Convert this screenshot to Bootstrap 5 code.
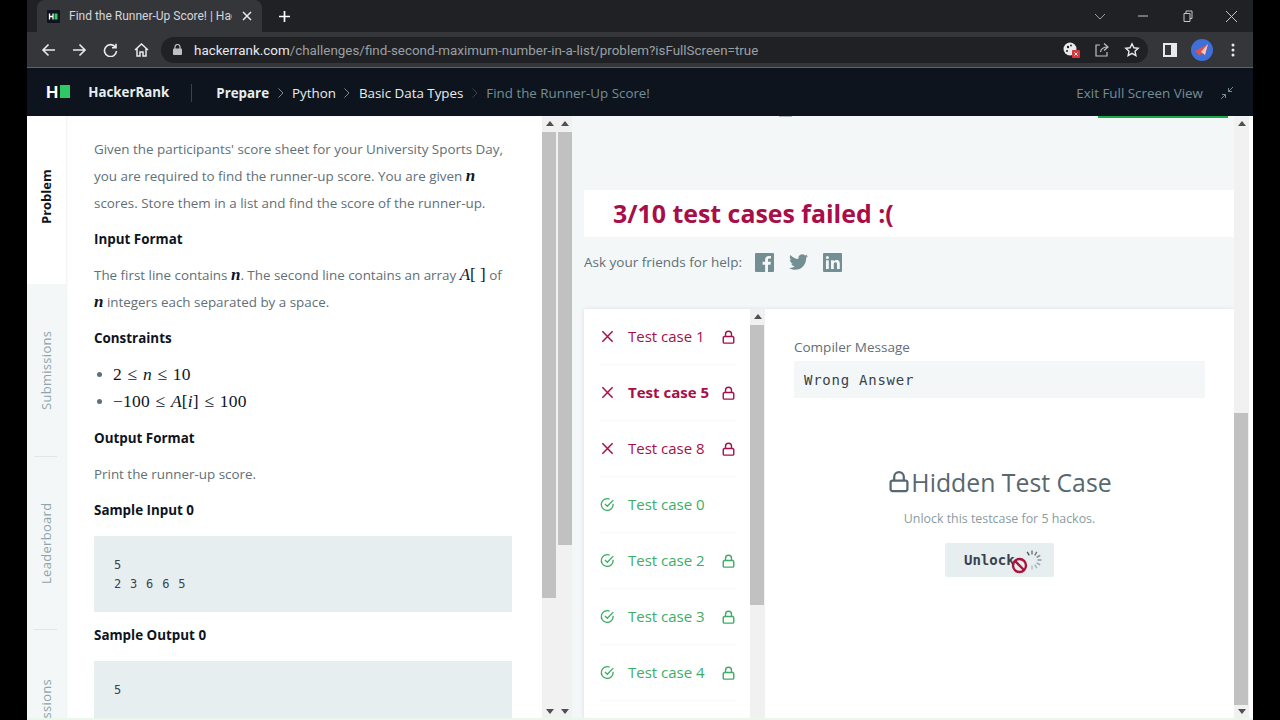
<!DOCTYPE html>
<html lang="en">
<head>
  <meta charset="UTF-8" />
  <title>Find the Runner-Up Score!</title>
  <link href="https://cdn.jsdelivr.net/npm/bootstrap@5.3.0/dist/css/bootstrap.min.css" rel="stylesheet" />
  <style>
    html, body { height: 720px; overflow: hidden; background: #000; }
    body { font-family: "Open Sans", sans-serif; font-size: 13.4px; color: #616f78; }
    .frame { width: 1226px; height: 720px; margin-left: 27px; overflow: hidden; background: #fff; }

    /* browser chrome */
    .tabstrip { height: 32px; background: #202124; color: #e8eaed; }
    .tab-active { width: 225px; height: 32px; margin-left: 10px; padding: 0 10px; background: #35363a; border-radius: 8px 8px 0 0; font-family: Roboto, sans-serif; font-size: 12px; }
    .tab-title { width: 163px; margin-left: 9px; white-space: nowrap; overflow: hidden; color: #d5d7da; }
    .new-tab { margin-left: 16px; }
    .win-btns { margin-left: auto; padding-right: 15px; gap: 31px; }
    .toolbar { height: 36px; background: #35363a; padding-left: 14px; border-bottom: 1px solid #5f6368; }
    .tool-icons { gap: 16px; }
    .omnibox { width: 987px; height: 26px; margin-left: 12px; padding: 0 8px 0 12px; background: #202124; border-radius: 13px; font-family: Roboto, sans-serif; font-size: 13.4px; color: #9aa0a6; }
    .omnibox b { font-weight: 400; color: #e8eaed; }
    .url-text { margin: 3px 0 0 12px; white-space: nowrap; }
    .omni-right { margin-left: auto; gap: 14px; }
    .tool-right { margin-left: 15px; }
    .avatar-dot { width: 22px; height: 22px; margin: 0 18px 0 14px; border-radius: 50%; background: #3f6fd8; }

    /* hackerrank header */
    .hr-nav { height: 48px; background: #0e141e; padding: 2px 19px 0; color: #fff; }
    .hr-logo { font-family: "Liberation Sans", sans-serif; font-weight: 700; font-size: 17px; line-height: 1; margin-top: -1px; }
    .hr-logo i { display: inline-block; width: 10px; height: 13px; margin-left: 2px; background: #2ec866; }
    .hr-brand { margin-left: 18px; font-weight: 700; font-size: 13.3px; color: #e7eeef; }
    .hr-sep { width: 1px; height: 18px; margin: 0 24px 0 22px; background: #39424e; }
    .hr-crumbs { font-size: 13.35px; color: #e7eeef; gap: 7.5px; }
    .hr-crumbs .is-last { color: #738f93; }
    .hr-exit { margin-left: auto; color: #738f93; gap: 17px; font-size: 13.4px; }

    /* page */
    .workspace { height: 604px; overflow: hidden; position: relative; }
    .workspace::after { content: ""; position: absolute; left: 0; right: 0; bottom: 0; height: 2px; background: #eaf8ec; }
    .side-tabs { width: 39px; flex: none; background: #f3f7f7; }
    .side-tab { flex: none; height: 172px; writing-mode: vertical-rl; transform: rotate(180deg); font-size: 13px; color: #8fa5aa; letter-spacing: .3px; }
    .side-tab.is-on { height: 168px; background: #fff; color: #0e141e; font-weight: 700; letter-spacing: 0; padding-top: 6px; }
    .side-rule { height: 1px; margin: 0 9px 0 7px; background: #dfe7e8; flex: none; }
    .problem { width: 476px; flex: none; padding: 20px 30px 0 28px; background: #fff; box-shadow: inset 1px 0 2px rgba(57,66,78,.08); }
    .problem p { line-height: 27px; margin-bottom: 9px; color: #616f78; }
    .problem h6 { font-size: 13.4px; font-weight: 700; line-height: 27px; color: #0e141e; margin-bottom: 9px; }
    .problem ul { padding-left: 19px; margin-bottom: 10px; color: #39424e; }
    .problem li { line-height: 27px; }
    .problem li::marker { color: #616f78; }
    .mth { font-family: "Liberation Serif", serif; font-size: 17px; line-height: 1; color: #0e141e; }
    .mth em { font-weight: 700; }
    .mth-plain em { font-weight: 400; }
    .mth-wide { font-size: 17.5px; letter-spacing: .2px; word-spacing: 1px; position: relative; top: 1px; }
    .sample { height: 76px; margin: 12px 0 10px; padding: 20px 20px 0; background: #e7eeef; font-family: "DejaVu Sans Mono", monospace; font-size: 12px; letter-spacing: .8px; line-height: 19px; color: #39424e; white-space: pre; }
    .scroll-y { width: 15px; flex: none; background: #f1f1f1; position: relative; padding-top: 16px; }
    .scroll-thumb { width: 14px; background: #c1c1c1; }
    .scroll-y.to-right .scroll-thumb { margin-left: 1px; }
    .arrow-up, .arrow-down { position: absolute; left: 4px; width: 0; height: 0; border-left: 4px solid transparent; border-right: 4px solid transparent; }
    .arrow-up { top: 5px; border-bottom: 5px solid #505050; }
    .arrow-down { bottom: 6px; border-top: 5px solid #505050; }

    .results { width: 662px; flex: none; padding: 74px 0 0 12px; background: #f3f7f7; overflow: hidden; position: relative; }
    .green-edge { position: absolute; top: 0; right: 6px; width: 130px; height: 2px; background: #1ba94c; }
    .grey-edge { position: absolute; top: 0; left: 207px; width: 13px; height: 1px; background: #b5bcbf; }
    .fail-band { height: 47px; padding-left: 29px; background: #fff; font-size: 24.9px; font-weight: 700; line-height: 47px; color: #a80e47; }
    .ask-row { height: 24px; margin-top: 13px; gap: 14px; font-size: 13.5px; color: #616f78; }
    .ask-icons { gap: 15px; margin-left: -1px; }
    .tests-card { height: 420px; margin-top: 35px; background: #fff; box-shadow: 0 0 4px rgba(57,66,78,.12); }
    .tests-list { width: 166px; flex: none; padding: 0 14px 0 16px; border: 0; }
    .tests-list .list-group-item { height: 56px; padding: 0; background: transparent; border: 0; border-bottom: 1px solid #f6f9f9; border-radius: 0; font-size: 15px; }
    .is-fail { color: #a80e47; }
    .is-pass { color: #3dad66; }
    .t-name { margin-left: 13px; flex: 1; white-space: nowrap; }
    .t-lock { margin-top: 2px; }
    .test-detail { padding: 29px 29px 0 29px; flex: 1; min-width: 0; }
    .detail-label { font-size: 13.5px; line-height: 18px; color: #616f78; }
    .wrong-box { height: 37px; margin-top: 5px; padding-left: 10px; background: #f3f7f7; font-family: "DejaVu Sans Mono", monospace; font-size: 14px; letter-spacing: .75px; line-height: 38px; color: #39424e; }
    .hidden-head { margin-top: 65px; font-size: 24.8px; line-height: 38px; color: #576871; }
    .hidden-sub { margin-top: 9px; font-size: 12.4px; line-height: 18px; color: #8a9ba0; }
    .unlock-btn { width: 109px; height: 34px; margin-top: 15px; padding: 0 0 0 19px; background: #e7eeef; border: 0; border-radius: 2px; font-family: "DejaVu Sans Mono", monospace; font-size: 14px; font-weight: 700; color: #39424e; text-align: left; position: relative; }
    .btn-spin { position: absolute; left: 76px; top: 6px; }
    .no-cursor { position: absolute; left: 66px; top: 14px; }
  </style>
</head>
<body>
  <svg width="0" height="0" class="position-absolute">
    <symbol id="lock" viewBox="0 0 16 16"><path d="M4.800 7V4.600a3.200 3.200 0 0 1 6.400 0V7M3.600 7h8.800a1.200 1.200 0 0 1 1.200 1.200v4.600a1.200 1.200 0 0 1-1.200 1.200H3.600a1.200 1.200 0 0 1-1.200-1.200V8.200a1.200 1.200 0 0 1 1.200-1.200z" fill="none" stroke="currentColor" stroke-width="1.500"/></symbol>
    <symbol id="cross" viewBox="0 0 16 16"><path d="M2.500 2.500l11 11M13.500 2.500l-11 11" fill="none" stroke="currentColor" stroke-width="1.600"/></symbol>
    <symbol id="check" viewBox="0 0 16 16"><path d="M14 7.300V8a6.300 6.300 0 1 1-3.700-5.700M5.200 7.300l2.600 2.600 6.400-6.600" fill="none" stroke="currentColor" stroke-width="1.400"/></symbol>
    <symbol id="chev" viewBox="0 0 8 12"><path d="M1.500 1.500L6 6l-4.500 4.500" fill="none" stroke="currentColor" stroke-width="1"/></symbol>
  </svg>

  <div class="frame">
    <div class="tabstrip d-flex align-items-center">
      <div class="tab-active d-flex align-items-center">
        <svg width="13" height="13" viewBox="0 0 13 13"><rect width="13" height="13" rx="1" fill="#0e141e"/><path d="M2.500 3.500v6M6 3.500v6M2.500 6.500H6" stroke="#fff" stroke-width="1.300"/><rect x="7.500" y="3.500" width="3" height="6" fill="#2ec866"/></svg>
        <span class="tab-title">Find the Runner-Up Score! | Hac</span>
        <svg class="ms-auto" width="10" height="10" viewBox="0 0 10 10"><path d="M1 1l8 8M9 1l-8 8" stroke="#e8eaed" stroke-width="1.500"/></svg>
      </div>
      <svg class="new-tab" width="13" height="13" viewBox="0 0 13 13"><path d="M6.500 1v11M1 6.500h11" stroke="#fff" stroke-width="1.700"/></svg>
      <div class="win-btns d-flex align-items-center">
        <svg width="12" height="12" viewBox="0 0 12 12"><path d="M1 4l5 5 5-5" fill="none" stroke="#9aa0a6"/></svg>
        <svg width="13" height="12" viewBox="0 0 13 12"><path d="M1 6h10" stroke="#c4c7c9"/></svg>
        <svg width="13" height="12" viewBox="0 0 13 12"><path d="M3 3.500h6v8H3zM5 3.500V1h6v7.500H9" fill="none" stroke="#c4c7c9"/></svg>
        <svg width="13" height="13" viewBox="0 0 13 13"><path d="M1 1l11 11M12 1L1 12" stroke="#c4c7c9"/></svg>
      </div>
    </div>

    <div class="toolbar d-flex align-items-center">
      <div class="tool-icons d-flex align-items-center">
        <svg width="15" height="14" viewBox="0 0 15 14"><path d="M14 7H2M7.500 1.500L2 7l5.500 5.500" fill="none" stroke="#e8eaed" stroke-width="1.600"/></svg>
        <svg width="15" height="14" viewBox="0 0 15 14"><path d="M1 7h12M7.500 1.500L13 7l-5.500 5.500" fill="none" stroke="#e8eaed" stroke-width="1.600"/></svg>
        <svg width="15" height="14" viewBox="0 0 15 14"><path d="M12.500 4.300A6 6 0 1 0 13.500 8M13 .8v4h-4" fill="none" stroke="#e8eaed" stroke-width="1.600"/></svg>
        <svg width="15" height="14" viewBox="0 0 15 14"><path d="M1 7l6.500-6L14 7M3 5.500V13h3V9h3v4h3V5.500" fill="none" stroke="#e8eaed" stroke-width="1.500"/></svg>
      </div>
      <div class="omnibox d-flex align-items-center">
        <svg width="9" height="11" viewBox="0 0 9 11"><path d="M2 5V3a2.500 2.500 0 0 1 5 0v2" fill="none" stroke="#bdc1c6" stroke-width="1.200"/><rect y="4.500" width="9" height="6.500" rx="1" fill="#bdc1c6"/></svg>
        <span class="url-text"><b>hackerrank.com</b>/challenges/find-second-maximum-number-in-a-list/problem?isFullScreen=true</span>
        <div class="omni-right d-flex align-items-center">
          <svg width="17" height="16" viewBox="0 0 17 16"><circle cx="7" cy="7" r="6.500" fill="#e8eaed"/><circle cx="5" cy="5" r="1.200" fill="#202124"/><circle cx="8" cy="3.500" r=".9" fill="#202124"/><circle cx="4" cy="9" r="1" fill="#202124"/><rect x="9" y="8" width="8" height="8" rx="1" fill="#d9363e"/><path d="M11.500 10.500l3 3M14.500 10.500l-3 3" stroke="#fff"/></svg>
          <svg width="16" height="16" viewBox="0 0 16 16"><path d="M6 3H2v11h11v-4M6.500 10c.5-3 3-5 7-5M10 1.500L14 5l-4 3.500" fill="none" stroke="#bdc1c6" stroke-width="1.200"/></svg>
          <svg width="16" height="16" viewBox="0 0 16 16"><path d="M8 1.800l1.900 4 4.300.5-3.200 3 .9 4.300L8 11.400l-3.900 2.200.9-4.300-3.200-3 4.300-.5z" fill="none" stroke="#e8eaed" stroke-width="1.400"/></svg>
        </div>
      </div>
      <div class="tool-right d-flex align-items-center">
        <svg width="14" height="14" viewBox="0 0 14 14"><rect x="1" y="1" width="12" height="12" fill="none" stroke="#e8eaed" stroke-width="2"/><rect x="8" y="1" width="5" height="12" fill="#e8eaed"/></svg>
        <svg class="avatar-dot" viewBox="0 0 22 22"><path d="M4 12l13-7-3 11-3-3-2 4z" fill="#d9534f"/><path d="M10 13l7-8-3 11z" fill="#f4c9c4"/></svg>
        <svg width="4" height="14" viewBox="0 0 4 14"><circle cx="2" cy="2" r="1.500" fill="#e8eaed"/><circle cx="2" cy="7" r="1.500" fill="#e8eaed"/><circle cx="2" cy="12" r="1.500" fill="#e8eaed"/></svg>
      </div>
    </div>

    <nav class="hr-nav d-flex align-items-center">
      <span class="hr-logo">H<i></i></span>
      <span class="hr-brand">HackerRank</span>
      <span class="hr-sep"></span>
      <div class="hr-crumbs d-flex align-items-center">
        <strong>Prepare</strong>
        <svg width="8" height="12" color="#738f93"><use href="#chev"/></svg>
        <span>Python</span>
        <svg width="8" height="12" color="#738f93"><use href="#chev"/></svg>
        <span>Basic Data Types</span>
        <svg width="8" height="12" color="#39424e"><use href="#chev"/></svg>
        <span class="is-last">Find the Runner-Up Score!</span>
      </div>
      <div class="hr-exit d-flex align-items-center">
        <span>Exit Full Screen View</span>
        <svg width="14" height="14" viewBox="0 0 14 14"><path d="M8.500 5.500L13 1M8.500 2v3.500H12M5.500 8.500L1 13M5.500 12V8.500H2" fill="none" stroke="#738f93"/></svg>
      </div>
    </nav>

    <div class="workspace d-flex">
      <div class="side-tabs d-flex flex-column">
        <div class="side-tab is-on d-flex align-items-center justify-content-center">Problem</div>
        <div class="side-tab d-flex align-items-center justify-content-center">Submissions</div>
        <div class="side-rule"></div>
        <div class="side-tab d-flex align-items-center justify-content-center">Leaderboard</div>
        <div class="side-rule"></div>
        <div class="side-tab d-flex align-items-center justify-content-center">Discussions</div>
      </div>

      <div class="problem">
        <p>Given the participants' score sheet for your University Sports Day, you are required to find the runner-up score. You are given <span class="mth"><em>n</em></span> scores. Store them in a list and find the score of the runner-up.</p>
        <h6>Input Format</h6>
        <p>The first line contains <span class="mth"><em>n</em></span>. The second line contains an array <span class="mth mth-plain"><em>A</em>[ ]</span> of <span class="mth"><em>n</em></span> integers each separated by a space.</p>
        <h6>Constraints</h6>
        <ul>
          <li><span class="mth mth-plain mth-wide">2 ≤ <em>n</em> ≤ 10</span></li>
          <li><span class="mth mth-plain mth-wide">−100 ≤ <em>A</em>[<em>i</em>] ≤ 100</span></li>
        </ul>
        <h6>Output Format</h6>
        <p>Print the runner-up score.</p>
        <h6>Sample Input 0</h6>
        <div class="sample">5
2 3 6 6 5</div>
        <h6>Sample Output 0</h6>
        <div class="sample">5</div>
      </div>

      <div class="scroll-y"><span class="arrow-up"></span><div class="scroll-thumb" style="height:466px"></div><span class="arrow-down"></span></div>
      <div class="scroll-y to-right"><span class="arrow-up"></span><div class="scroll-thumb" style="height:413px"></div><span class="arrow-down"></span></div>

      <div class="results">
        <span class="green-edge"></span>
        <span class="grey-edge"></span>
        <div class="fail-band">3/10 test cases failed :(</div>
        <div class="ask-row d-flex align-items-center">
          <span>Ask your friends for help:</span>
          <div class="ask-icons d-flex align-items-center">
            <svg width="19" height="19" viewBox="0 0 19 19"><path fill-rule="evenodd" d="M1 0h17a1 1 0 0 1 1 1v17a1 1 0 0 1-1 1h-5v-7.300h2.500l.4-2.900H13V7c0-.8.3-1.400 1.400-1.400H16V3c-.3 0-1.200-.1-2.200-.1-2.200 0-3.700 1.300-3.700 3.800v2.100H7.600v2.900h2.500V19H1a1 1 0 0 1-1-1V1a1 1 0 0 1 1-1z" fill="#738f93"/></svg>
            <svg width="19" height="16" viewBox="0 0 19 16"><path d="M19 2c-.7.3-1.500.5-2.200.6.8-.5 1.400-1.200 1.700-2.100-.8.4-1.600.8-2.500 1A3.900 3.900 0 0 0 9.400 5C6.200 4.800 3.300 3.300 1.400.9.300 2.700.800 5 2.600 6.100c-.6 0-1.200-.2-1.800-.5 0 1.900 1.300 3.500 3.100 3.900-.6.200-1.200.2-1.800.1.500 1.600 2 2.700 3.700 2.700A7.900 7.900 0 0 1 0 14c1.800 1.100 3.900 1.800 6 1.800 7.300 0 11.400-6.200 11.100-11.700.8-.6 1.400-1.300 1.900-2.100z" fill="#738f93"/></svg>
            <svg width="19" height="19" viewBox="0 0 19 19"><path fill-rule="evenodd" d="M1 0h17a1 1 0 0 1 1 1v17a1 1 0 0 1-1 1H1a1 1 0 0 1-1-1V1a1 1 0 0 1 1-1zm2 7.200V16h2.800V7.200zm1.400-4.300a1.600 1.600 0 1 0 0 3.200 1.600 1.600 0 0 0 0-3.200zM8 7.200V16h2.800v-4.400c0-1.200.2-2.300 1.700-2.300s1.500 1.400 1.500 2.400V16H16.800v-4.900c0-2.400-.5-4.200-3.300-4.200-1.300 0-2.200.7-2.600 1.400V7.200z" fill="#738f93"/></svg>
          </div>
        </div>

        <div class="tests-card d-flex">
          <div class="list-group tests-list">
            <div class="list-group-item d-flex align-items-center is-fail"><svg width="15" height="15"><use href="#cross"/></svg><span class="t-name">Test case 1</span><svg class="t-lock" width="15" height="15"><use href="#lock"/></svg></div>
            <div class="list-group-item d-flex align-items-center is-fail fw-bold"><svg width="15" height="15"><use href="#cross"/></svg><span class="t-name">Test case 5</span><svg class="t-lock" width="15" height="15"><use href="#lock"/></svg></div>
            <div class="list-group-item d-flex align-items-center is-fail"><svg width="15" height="15"><use href="#cross"/></svg><span class="t-name">Test case 8</span><svg class="t-lock" width="15" height="15"><use href="#lock"/></svg></div>
            <div class="list-group-item d-flex align-items-center is-pass"><svg width="15" height="15"><use href="#check"/></svg><span class="t-name">Test case 0</span></div>
            <div class="list-group-item d-flex align-items-center is-pass"><svg width="15" height="15"><use href="#check"/></svg><span class="t-name">Test case 2</span><svg class="t-lock" width="15" height="15"><use href="#lock"/></svg></div>
            <div class="list-group-item d-flex align-items-center is-pass"><svg width="15" height="15"><use href="#check"/></svg><span class="t-name">Test case 3</span><svg class="t-lock" width="15" height="15"><use href="#lock"/></svg></div>
            <div class="list-group-item d-flex align-items-center is-pass"><svg width="15" height="15"><use href="#check"/></svg><span class="t-name">Test case 4</span><svg class="t-lock" width="15" height="15"><use href="#lock"/></svg></div>
          </div>
          <div class="scroll-y"><span class="arrow-up"></span><div class="scroll-thumb" style="height:280px"></div><span class="arrow-down"></span></div>
          <div class="test-detail">
            <div class="detail-label">Compiler Message</div>
            <div class="wrong-box">Wrong Answer</div>
            <div class="d-flex flex-column align-items-center">
              <div class="hidden-head d-flex align-items-center"><svg width="24" height="24"><use href="#lock"/></svg>Hidden Test Case</div>
              <div class="hidden-sub">Unlock this testcase for 5 hackos.</div>
              <button class="btn unlock-btn">Unlock
                <svg class="btn-spin" width="22" height="22" viewBox="0 0 22 22" fill="none" stroke-width="1.500"><path d="M11 1.500v4" stroke="#6d7b80"/><path d="M15.800 2.800l-2 3.500" stroke="#6d7b80"/><path d="M19.200 6.300l-3.500 2" stroke="#7c8a8f"/><path d="M20.500 11h-4" stroke="#8a9ba0"/><path d="M19.200 15.800l-3.500-2" stroke="#98a8ac"/><path d="M15.800 19.200l-2-3.500" stroke="#a8b5b9"/><path d="M11 20.500v-4" stroke="#b5c1c4"/><path d="M6.200 2.800l2 3.500" stroke="#4f5b60"/></svg>
                <svg class="no-cursor" width="17" height="17" viewBox="0 0 17 17"><circle cx="8.500" cy="8.500" r="6.500" fill="none" stroke="#a8143c" stroke-width="2.400"/><path d="M4 4l9 9" stroke="#a8143c" stroke-width="2.400"/></svg>
              </button>
            </div>
          </div>
        </div>
      </div>
      <div class="scroll-y"><span class="arrow-up"></span><div class="scroll-thumb" style="height:292px;margin-top:281px"></div><span class="arrow-down"></span></div>
    </div>
  </div>
  <script src="https://cdn.jsdelivr.net/npm/bootstrap@5.3.0/dist/js/bootstrap.bundle.min.js"></script>
</body>
</html>
